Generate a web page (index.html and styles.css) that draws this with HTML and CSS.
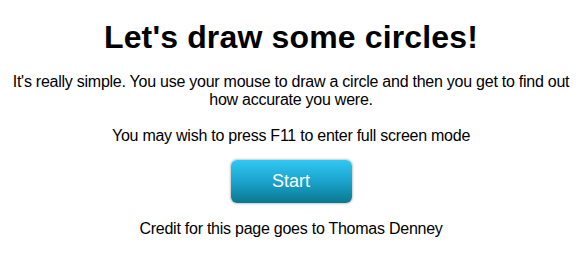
FILE: index.html
```html
<!DOCTYPE html>
<html>
<head>
<meta charset="utf-8">
<link rel="stylesheet" href="styles.css">
</head>
<body>
<div class="page">
  <h1 class="title">Let's draw some circles!</h1>
  <p class="intro">It's really simple. You use your mouse to draw a circle and then you get to find out how accurate you were.</p>
  <p class="note">You may wish to press F11 to enter full screen mode</p>
  <button class="start">Start</button>
  <p class="credit">Credit for this page goes to Thomas Denney</p>
</div>
</body>
</html>
```

FILE: styles.css
```css
html, body {
  margin: 0;
  padding: 0;
  background: #ffffff;
}
body {
  font-family: "Liberation Sans", Arial, sans-serif;
  color: #000000;
}
.page {
  display: flex;
  flex-direction: column;
  align-items: center;
  text-align: center;
  padding: 19px 8px 0;
}
.title {
  margin: 0;
  font-size: 32px;
  line-height: 36px;
  font-weight: bold;
  letter-spacing: 0.15px;
}
.intro,
.note,
.credit {
  font-size: 16px;
  line-height: 18.4px;
  letter-spacing: -0.25px;
}
.intro {
  margin: 18px 0 0;
}
.note {
  margin: 17px 0 0;
}
.start {
  margin-top: 15px;
  width: 121px;
  height: 43px;
  border: none;
  border-radius: 6px;
  background: linear-gradient(to bottom, #31c8f3 0%, #1aa3cc 50%, #0a7890 100%);
  box-shadow: 0 0 2px 1px #c8c8c8;
  color: #ffffff;
  font-family: "Liberation Sans", Arial, sans-serif;
  font-size: 18px;
  padding: 0;
}
.credit {
  margin: 17px 0 0;
}
```
